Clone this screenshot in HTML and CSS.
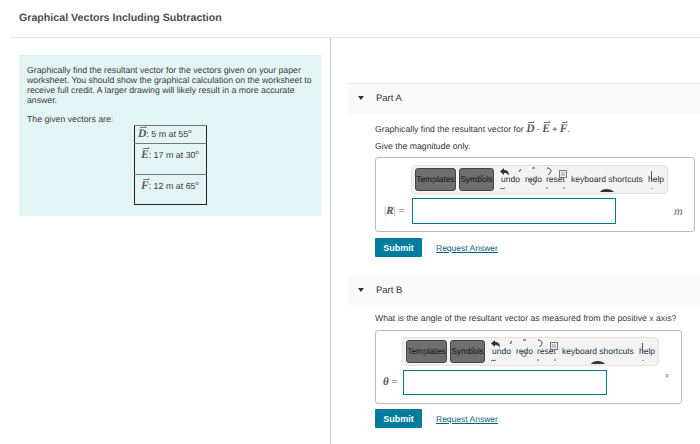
FILE: index.html
```html
<!DOCTYPE html>
<html lang="en">
<head>
<meta charset="utf-8">
<title>Graphical Vectors Including Subtraction</title>
<link rel="stylesheet" href="styles.css">
</head>
<body>
<header class="title-bar"><h1>Graphical Vectors Including Subtraction</h1></header>
<main class="columns">
  <section class="left">
    <div class="intro">
      <p class="intro-text">Graphically find the resultant vector for the vectors given on your paper worksheet. You should show the graphical calculation on the worksheet to receive full credit. A larger drawing will likely result in a more accurate answer.</p>
      <p class="given">The given vectors are:</p>
      <table class="vectors">
        <tr class="row-d"><td><i class="vec">D</i>: 5 m at 55<sup>o</sup></td></tr>
        <tr class="row-e"><td><i class="vec">E</i>: 17 m at 30<sup>o</sup></td></tr>
        <tr class="row-f"><td><i class="vec">F</i>: 12 m at 65<sup>o</sup></td></tr>
      </table>
    </div>
  </section>
  <section class="right">
    <article class="part part-a">
      <div class="part-head"><span class="caret"></span><span class="part-name">Part A</span></div>
      <div class="part-body">
        <p class="q q-first">Graphically find the resultant vector for <i class="vec">D</i> - <i class="vec">E</i> + <i class="vec">F</i>.</p>
        <p class="q q-second">Give the magnitude only.</p>
        <div class="editor editor-a">
          <div class="toolbar toolbar-a">
            <span class="tool-btn tb-templates">Templates</span>
            <span class="tool-btn tb-symbols">Symbols</span>
            <span class="tool-link tl-undo">undo</span>
            <span class="tool-link tl-redo">redo</span>
            <span class="tool-link tl-reset">reset</span>
            <span class="tool-link tl-keys">keyboard shortcuts</span>
            <span class="tool-link tl-help">help</span>
            <svg class="tool-icons" width="257" height="29" viewBox="0 0 257 29" fill="none">
              <path d="M88 5.5 L92 2 L92 4 C96 4 97.5 6.5 96.5 10 C96 7.5 94.5 6.8 92 7 L92 9 Z" fill="#333"/>
              <path d="M107.500 6l1-3M120 2h3M135 2c3 0 5 2 3.500 4.500l-2 2.500" stroke="#444"/>
              <path d="M88 23l2-1 1 1 2-1M135 21v2M152 21v2M240 22v1M22 13v6" stroke="#666"/>
              <circle cx="121" cy="16" r="2.500" stroke="#777"/>
              <circle cx="70" cy="10" r="1.500" fill="#555"/>
              <rect x="147.500" y="4.500" width="7" height="7" fill="#eee" stroke="#777"/>
              <path d="M149 7h4M149 9h4" stroke="#999"/>
              <path d="M188 26c2-4 11-4 14 0z" fill="#333"/>
              <path d="M239.500 5v10" stroke="#555"/>
            </svg>
          </div>
          <div class="answer-row answer-row-a">
            <span class="label"><span class="bar">|</span><i>R</i><span class="bar">|</span> =</span>
            <span class="answer"></span>
            <i class="unit">m</i>
          </div>
        </div>
        <div class="actions"><button class="submit">Submit</button><a class="request" href="#">Request Answer</a></div>
      </div>
    </article>
    <article class="part part-b">
      <div class="part-head"><span class="caret"></span><span class="part-name">Part B</span></div>
      <div class="part-body">
        <p class="q q-b">What is the angle of the resultant vector as measured from the positive x axis?</p>
        <div class="editor editor-b">
          <div class="toolbar toolbar-b">
            <span class="tool-btn tb-templates">Templates</span>
            <span class="tool-btn tb-symbols">Symbols</span>
            <span class="tool-link tl-undo">undo</span>
            <span class="tool-link tl-redo">redo</span>
            <span class="tool-link tl-reset">reset</span>
            <span class="tool-link tl-keys">keyboard shortcuts</span>
            <span class="tool-link tl-help">help</span>
            <svg class="tool-icons" width="257" height="29" viewBox="0 0 257 29" fill="none">
              <path d="M88 5.5 L92 2 L92 4 C96 4 97.5 6.5 96.5 10 C96 7.5 94.5 6.8 92 7 L92 9 Z" fill="#333"/>
              <path d="M107.500 6l1-3M120 2h3M135 2c3 0 5 2 3.500 4.500l-2 2.500" stroke="#444"/>
              <path d="M88 23l2-1 1 1 2-1M135 21v2M152 21v2M240 22v1M22 13v6" stroke="#666"/>
              <circle cx="121" cy="16" r="2.500" stroke="#777"/>
              <circle cx="70" cy="10" r="1.500" fill="#555"/>
              <rect x="147.500" y="4.500" width="7" height="7" fill="#eee" stroke="#777"/>
              <path d="M149 7h4M149 9h4" stroke="#999"/>
              <path d="M188 26c2-4 11-4 14 0z" fill="#333"/>
              <path d="M239.500 5v10" stroke="#555"/>
            </svg>
          </div>
          <div class="answer-row answer-row-b">
            <span class="label"><i>θ</i> =</span>
            <span class="answer"></span>
            <span class="unit unit-deg">°</span>
          </div>
        </div>
        <div class="actions actions-b"><button class="submit">Submit</button><a class="request" href="#">Request Answer</a></div>
      </div>
    </article>
  </section>
</main>
</body>
</html>
```
FILE: styles.css
```css
* { box-sizing: border-box; }
html, body { margin: 0; padding: 0; height: 444px; overflow: hidden; background: #fff; }
body { font-family: "Liberation Sans", Arial, sans-serif; color: #3a3a3a; font-size: 9px; text-rendering: geometricPrecision; }
p { margin: 0; }

.title-bar { height: 38px; margin-left: 10px; border-bottom: 1px solid #e2e4e6; padding: 12px 0 0 9px; }
h1 { margin: 0; font-size: 10.65px; line-height: 13px; font-weight: 700; color: #4d4d4d; }

.columns { display: flex; height: 406px; }
.left { width: 331px; border-right: 1px solid #bccbdc; padding: 17px 9px 0 19px; }
.intro { background: #e4f5f6; height: 161px; border-top: 1px solid #e0e8e9; padding: 9px 8px 0; }
.intro-text { font-size: 8.72px; line-height: 10px; width: 290px; }
.given { font-size: 8.72px; line-height: 10px; margin-top: 9px; }

.vectors { border-collapse: collapse; margin: 1px 0 0 107px; width: 73px; font-size: 8.9px; border: 1px solid #222; }
.vectors td { padding: 0; border-top: 1px solid #777; vertical-align: top; line-height: 10px; }
.row-d td { height: 18px; padding: 3px 0 0 3px; }
.row-e td { height: 31px; padding: 6px 0 0 6px; }
.row-f td { height: 30px; padding: 6px 0 0 6px; }
sup { font-size: 6px; line-height: 0; }

.vec { position: relative; display: inline-block; font-family: "Liberation Serif", serif; font-weight: 700; font-size: 11.5px; line-height: 10px; color: #5a5a5a; }
.vec::before { content: ""; position: absolute; left: 2px; right: 0; top: -2px; height: 1px; background: #777; }
.vec::after { content: ""; position: absolute; right: -1px; top: -3px; border: 1.5px solid transparent; border-left: 2px solid #777; border-right: 0; }

.right { flex: 1; padding: 45px 0 0 17px; min-width: 0; }
.part-head { display: flex; align-items: center; background: #fafafa; border-top: 1px solid #e6e6e6; }
.part-a .part-head { height: 31px; padding-bottom: 2px; }
.part-b .part-head { height: 30px; border-top: 0; }
.part-b { margin-top: 18px; }
.caret { width: 0; height: 0; margin-left: 10px; border: 3.5px solid transparent; border-top: 4px solid #333; border-bottom: 0; }
.part-name { margin-left: 12px; font-size: 9.5px; color: #333; }
.part-body { padding-left: 27px; }

.q { font-size: 8.7px; line-height: 11px; white-space: nowrap; }
.q-first { margin-top: 10px; }
.q-second { margin-top: 6px; color: #333; }
.q-b { margin-top: 8px; }

.editor { border: 1px solid #bcbcbc; border-radius: 3px; }
.editor-a { width: 320px; height: 75px; margin-top: 5px; padding: 7px 0 0 35px; }
.editor-b { width: 307px; height: 74px; margin-top: 6px; padding: 6px 0 0 26px; }

.toolbar { position: relative; width: 257px; height: 29px; background: #f3f3f3; border: 1px solid #e2e2e2; border-radius: 4px; }
.tool-btn { position: absolute; top: 2px; height: 23px; background: #6f6f71; border: 1px solid #444; border-radius: 3px; color: #111; font-size: 8.5px; line-height: 21px; text-align: center; white-space: nowrap; }
.tb-templates { left: 3px; width: 41px; }
.tb-symbols { left: 47px; width: 35px; }
.tool-link { position: absolute; top: 7px; font-size: 8.5px; line-height: 12px; color: #234; white-space: nowrap; }
.tl-undo { left: 89px; }
.tl-redo { left: 113px; }
.tl-reset { left: 134px; }
.tl-keys { left: 159px; }
.tl-help { left: 236px; }
.tool-icons { position: absolute; left: 0; top: 0; }

.answer-row { display: flex; }
.answer-row-a { margin: 4px 0 0 -35px; }
.answer-row-b { margin: 4px 0 0 -26px; }
.label { font-family: "Liberation Serif", serif; font-size: 11px; line-height: 26px; color: #555; white-space: nowrap; }
.bar { color: #999; }
.label i { font-weight: 700; }
.answer-row-a .label { width: 36px; padding-left: 8px; }
.answer-row-b .label { width: 27px; padding-left: 7px; line-height: 24px; }
.answer { display: block; width: 204px; height: 26px; border: 1px solid #00789a; background: #fff; }
.answer-row-b .answer { height: 25px; }
.unit { font-family: "Liberation Serif", serif; font-size: 12px; line-height: 26px; color: #666; }
.answer-row-a .unit { margin-left: 58px; }
.unit-deg { margin-left: 58px; font-size: 10px; line-height: 17px; }

.actions { display: flex; align-items: center; margin-top: 6px; }
.actions-b { margin-top: 5px; }
.submit { width: 47px; height: 19px; padding: 0; border: 0; border-radius: 1px; background: #007c9c; color: #fff; font-family: inherit; font-size: 9px; font-weight: 700; }
.request { margin-left: 14px; font-size: 8.5px; font-weight: 400; color: #0b5f7c; text-decoration: underline; }
```
